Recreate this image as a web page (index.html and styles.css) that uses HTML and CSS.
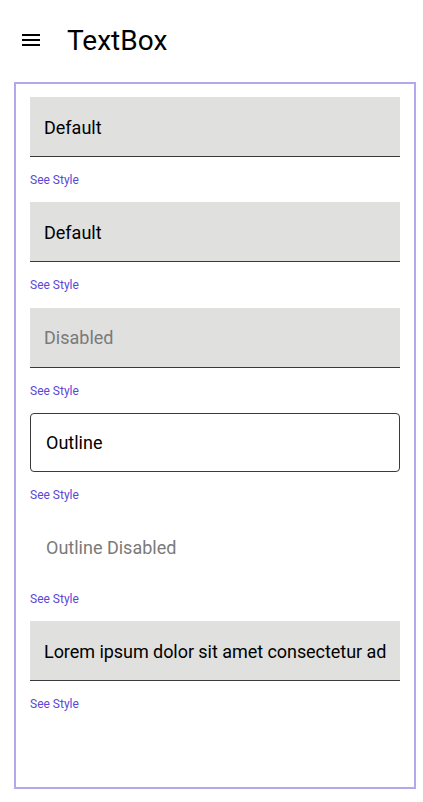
FILE: index.html
```html
<!DOCTYPE html>
<html lang="en">
<head>
    <meta charset="UTF-8">
    <meta name="viewport" content="width=device-width, initial-scale=1.0">
    <title>TextBox</title>
    <link rel="stylesheet" href="styles.css">
</head>
<body>
    <div class="top-bar">
        <svg class="menu-icon" width="24" height="24" viewBox="0 0 24 24">
            <path d="M3 18h18v-2H3v2zm0-5h18v-2H3v2zm0-7v2h18V6H3z" fill="#000"/>
        </svg>
        <h1 class="title">TextBox</h1>
    </div>
    <div class="frame">
        <div class="field filled"><span class="value">Default</span></div>
        <a class="see-style">See Style</a>
        <div class="field filled"><span class="value">Default</span></div>
        <a class="see-style">See Style</a>
        <div class="field filled disabled"><span class="value">Disabled</span></div>
        <a class="see-style">See Style</a>
        <div class="field outline"><span class="value">Outline</span></div>
        <a class="see-style">See Style</a>
        <div class="field outline disabled"><span class="value">Outline Disabled</span></div>
        <a class="see-style">See Style</a>
        <div class="field filled long"><span class="value">Lorem ipsum dolor sit amet consectetur ad</span></div>
        <a class="see-style">See Style</a>
    </div>
</body>
</html>
```

FILE: styles.css
```css
body {
    margin: 0;
    font-family: Roboto, "Noto Sans", sans-serif;
    background: #fff;
    color: #000;
}
.top-bar {
    display: flex;
    align-items: center;
    height: 82px;
    padding-left: 19px;
}
.menu-icon {
    display: block;
    margin-top: -2px;
}
.title {
    margin: 0 0 0 24px;
    font-size: 28px;
    font-weight: 400;
    line-height: 1;
}
.frame {
    margin-left: 14px;
    width: 402px;
    height: 707px;
    box-sizing: border-box;
    border: 2px solid #b4a8ec;
    padding: 13px 14px 0 14px;
    display: flex;
    flex-direction: column;
}
.field {
    height: 59px;
    display: flex;
    align-items: center;
    padding: 1px 8px 0 14px;
    box-sizing: content-box;
    font-size: 18px;
    border-bottom: 1px solid transparent;
}
.value {
    display: block;
    white-space: nowrap;
}
.field.long .value {
    letter-spacing: -0.05px;
}
.field.filled {
    height: 58px;
    background: #e0e0df;
    border-bottom: 1px solid #3a3a3a;
}
.field.outline {
    height: 56px;
    border: 1px solid #3a3a3a;
    border-radius: 4px;
    padding-left: 15px;
}
.field.disabled {
    color: #7a7a7a;
}
.field.outline.disabled {
    border-color: transparent;
}
.see-style {
    display: block;
    margin: 17px 0 16.3px;
    font-size: 12px;
    line-height: 12px;
    color: #5a48d6;
}
```
